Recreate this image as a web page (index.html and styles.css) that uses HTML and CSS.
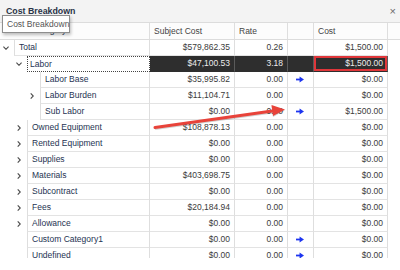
FILE: index.html
```html
<!DOCTYPE html>
<html>
<head>
<meta charset="utf-8">
<link rel="stylesheet" href="styles.css">
</head>
<body>
<div class="window">
  <div class="titlebar">
    <span class="title">Cost Breakdown</span>
    <span class="close">×</span>
  </div>
  <div class="grid">
    <div class="row header">
      <div class="c tree"><span class="label">Cost Category</span></div>
      <div class="c">Subject Cost</div>
      <div class="c">Rate</div>
      <div class="c"></div>
      <div class="c">Cost</div>
      <div class="c last"></div>
    </div>

    <div class="row">
      <div class="c tree"><span class="ind l0"><svg class="chev" viewBox="0 0 7 4"><polyline points="0.5,0.5 3.5,3.5 6.5,0.5"/></svg></span><span class="label">Total</span></div>
      <div class="c num">$579,862.35</div><div class="c num">0.26</div><div class="c"></div><div class="c num">$1,500.00</div><div class="c last"></div>
    </div>

    <div class="row selected">
      <div class="c tree"><span class="ind l1"><svg class="chev" viewBox="0 0 7 4"><polyline points="0.5,0.5 3.5,3.5 6.5,0.5"/></svg></span><span class="label focus">Labor</span></div>
      <div class="c num">$47,100.53</div><div class="c num">3.18</div><div class="c"></div><div class="c num marked">$1,500.00</div><div class="c last"></div>
    </div>

    <div class="row">
      <div class="c tree"><span class="ind l2"></span><span class="label">Labor Base</span></div>
      <div class="c num">$35,995.82</div><div class="c num">0.00</div><div class="c arrowcell"><svg class="go" viewBox="0 0 9 7"><rect x="0" y="2.5" width="5" height="2"/><polygon points="4,0 9,3.5 4,7"/></svg></div><div class="c num">$0.00</div><div class="c last"></div>
    </div>

    <div class="row">
      <div class="c tree"><span class="ind l2"><svg class="chevr" viewBox="0 0 4 7"><polyline points="0.5,0.5 3.5,3.5 0.5,6.5"/></svg></span><span class="label">Labor Burden</span></div>
      <div class="c num">$11,104.71</div><div class="c num">0.00</div><div class="c"></div><div class="c num">$0.00</div><div class="c last"></div>
    </div>

    <div class="row">
      <div class="c tree"><span class="ind l2"></span><span class="label">Sub Labor</span></div>
      <div class="c num">$0.00</div><div class="c num">0.00</div><div class="c arrowcell"><svg class="go" viewBox="0 0 9 7"><rect x="0" y="2.5" width="5" height="2"/><polygon points="4,0 9,3.5 4,7"/></svg></div><div class="c num">$1,500.00</div><div class="c last"></div>
    </div>

    <div class="row">
      <div class="c tree"><span class="ind l1"><svg class="chevr" viewBox="0 0 4 7"><polyline points="0.5,0.5 3.5,3.5 0.5,6.5"/></svg></span><span class="label">Owned Equipment</span></div>
      <div class="c num">$108,878.13</div><div class="c num">0.00</div><div class="c"></div><div class="c num">$0.00</div><div class="c last"></div>
    </div>

    <div class="row">
      <div class="c tree"><span class="ind l1"><svg class="chevr" viewBox="0 0 4 7"><polyline points="0.5,0.5 3.5,3.5 0.5,6.5"/></svg></span><span class="label">Rented Equipment</span></div>
      <div class="c num">$0.00</div><div class="c num">0.00</div><div class="c"></div><div class="c num">$0.00</div><div class="c last"></div>
    </div>

    <div class="row">
      <div class="c tree"><span class="ind l1"><svg class="chevr" viewBox="0 0 4 7"><polyline points="0.5,0.5 3.5,3.5 0.5,6.5"/></svg></span><span class="label">Supplies</span></div>
      <div class="c num">$0.00</div><div class="c num">0.00</div><div class="c"></div><div class="c num">$0.00</div><div class="c last"></div>
    </div>

    <div class="row">
      <div class="c tree"><span class="ind l1"><svg class="chevr" viewBox="0 0 4 7"><polyline points="0.5,0.5 3.5,3.5 0.5,6.5"/></svg></span><span class="label">Materials</span></div>
      <div class="c num">$403,698.75</div><div class="c num">0.00</div><div class="c"></div><div class="c num">$0.00</div><div class="c last"></div>
    </div>

    <div class="row">
      <div class="c tree"><span class="ind l1"><svg class="chevr" viewBox="0 0 4 7"><polyline points="0.5,0.5 3.5,3.5 0.5,6.5"/></svg></span><span class="label">Subcontract</span></div>
      <div class="c num">$0.00</div><div class="c num">0.00</div><div class="c"></div><div class="c num">$0.00</div><div class="c last"></div>
    </div>

    <div class="row">
      <div class="c tree"><span class="ind l1"><svg class="chevr" viewBox="0 0 4 7"><polyline points="0.5,0.5 3.5,3.5 0.5,6.5"/></svg></span><span class="label">Fees</span></div>
      <div class="c num">$20,184.94</div><div class="c num">0.00</div><div class="c"></div><div class="c num">$0.00</div><div class="c last"></div>
    </div>

    <div class="row">
      <div class="c tree"><span class="ind l1"><svg class="chevr" viewBox="0 0 4 7"><polyline points="0.5,0.5 3.5,3.5 0.5,6.5"/></svg></span><span class="label">Allowance</span></div>
      <div class="c num">$0.00</div><div class="c num">0.00</div><div class="c"></div><div class="c num">$0.00</div><div class="c last"></div>
    </div>

    <div class="row">
      <div class="c tree"><span class="ind l1"></span><span class="label">Custom Category1</span></div>
      <div class="c num">$0.00</div><div class="c num">0.00</div><div class="c arrowcell"><svg class="go" viewBox="0 0 9 7"><rect x="0" y="2.5" width="5" height="2"/><polygon points="4,0 9,3.5 4,7"/></svg></div><div class="c num">$0.00</div><div class="c last"></div>
    </div>

    <div class="row">
      <div class="c tree"><span class="ind l1"></span><span class="label">Undefined</span></div>
      <div class="c num">$0.00</div><div class="c num">0.00</div><div class="c arrowcell"><svg class="go" viewBox="0 0 9 7"><rect x="0" y="2.5" width="5" height="2"/><polygon points="4,0 9,3.5 4,7"/></svg></div><div class="c num">$0.00</div><div class="c last"></div>
    </div>
  </div>

  <div class="tooltip">Cost Breakdown</div>

  <svg class="annot" viewBox="0 0 400 270" width="400" height="270">
    <line x1="155" y1="128.5" x2="274" y2="111.8" class="shadow"/>
    <polygon points="285,110.5 271.5,106 273,117" class="shadowhead"/>
    <line x1="155" y1="127.5" x2="274" y2="110.8" class="shaft"/>
    <polygon points="285,109.5 271.5,105 273,116" class="head"/>
  </svg>
</div>
</body>
</html>
```

FILE: styles.css
```css
* { box-sizing: border-box; }

html, body {
  margin: 0;
  padding: 0;
  background: #ffffff;
}

body {
  font-family: "Liberation Sans", Arial, sans-serif;
  font-size: 8.5px;
  color: #333;
}

.window {
  position: relative;
  width: 400px;
  height: 270px;
  overflow: hidden;
  background: #ffffff;
}

.titlebar {
  height: 22px;
  background: #f3f3f3;
  display: flex;
  align-items: center;
  justify-content: space-between;
  padding: 0 4px 0 6px;
}

.title {
  font-weight: bold;
  font-size: 8.8px;
  color: #2a3448;
}

.close {
  font-size: 11px;
  color: #6a6a6a;
  line-height: 1;
}

.grid {
  height: 236px;
  overflow: hidden;
  background: #fff;
}

.row {
  display: grid;
  grid-template-columns: 150px 85px 53px 26px 74px 12px;
  height: 16px;
}

.row.header {
  height: 18px;
  background: #fcfcfc;
  border-top: 1px solid #dcdcdc;
  border-bottom: 1px solid #dcdcdc;
}

.c {
  border-right: 1px solid #dedede;
  border-bottom: 1px solid #e3e3e3;
  padding: 0 4px;
  line-height: 15px;
  white-space: nowrap;
  overflow: hidden;
  color: #3b3b3b;
}

.header .c {
  border-bottom: none;
  line-height: 17px;
  color: #444;
}

.c.last {
  border-right: none;
  border-bottom: none;
}

.header .c.last { border-right: none; }

.c.num { text-align: right; }

.c.tree {
  display: flex;
  padding: 0;
  border-bottom: none;
  overflow: visible;
}

.header .c.tree { padding-left: 12px; }
.header .c.tree .label { border: none; padding: 0; }

.ind {
  flex: none;
  display: flex;
  align-items: center;
  justify-content: flex-end;
  padding-right: 5px;
}

.ind.l0 { width: 14px; }
.ind.l1 { width: 27px; }
.ind.l2 { width: 40px; }

.label {
  flex: 1;
  border-left: 1px solid #dedede;
  border-bottom: 1px solid #e3e3e3;
  padding-left: 4px;
  color: #253352;
  line-height: 15px;
}

.label.focus {
  border: 1px dotted #444;
  margin-right: -1px;
  line-height: 14px;
  padding-left: 2px;
  background: #fff;
}

.chev {
  width: 6px;
  height: 4px;
  fill: none;
  stroke: #4a4a4a;
  stroke-width: 1.3;
}

.chevr {
  width: 4px;
  height: 6px;
  fill: none;
  stroke: #4a4a4a;
  stroke-width: 1.3;
  margin-right: 1px;
}

.selected .c:not(.tree):not(.last) {
  background: #2e2e2e;
  color: #ececec;
  border-right-color: #5a5a5a;
  border-bottom-color: #2e2e2e;
}

.c.marked {
  box-shadow: inset 0 0 0 2px #e0363a;
  position: relative;
}

.arrowcell {
  display: flex;
  align-items: center;
  padding-left: 8px;
}

.go {
  width: 8px;
  height: 7px;
  fill: #1d35f0;
}

.tooltip {
  position: absolute;
  left: 2px;
  top: 15px;
  width: 68px;
  height: 18px;
  background: #fff;
  border: 1px solid #8e8e8e;
  box-shadow: 1px 2px 3px rgba(0,0,0,0.25);
  padding: 0 4px;
  line-height: 16px;
  color: #555;
  font-size: 8.5px;
  white-space: nowrap;
}

.annot {
  position: absolute;
  left: 0;
  top: 0;
  pointer-events: none;
}

.annot .shaft {
  stroke: #e8433a;
  stroke-width: 3;
  stroke-linecap: round;
}

.annot .head { fill: #e8433a; }

.annot .shadow {
  stroke: rgba(0,0,0,0.18);
  stroke-width: 3;
}

.annot .shadowhead { fill: rgba(0,0,0,0.18); }
```
